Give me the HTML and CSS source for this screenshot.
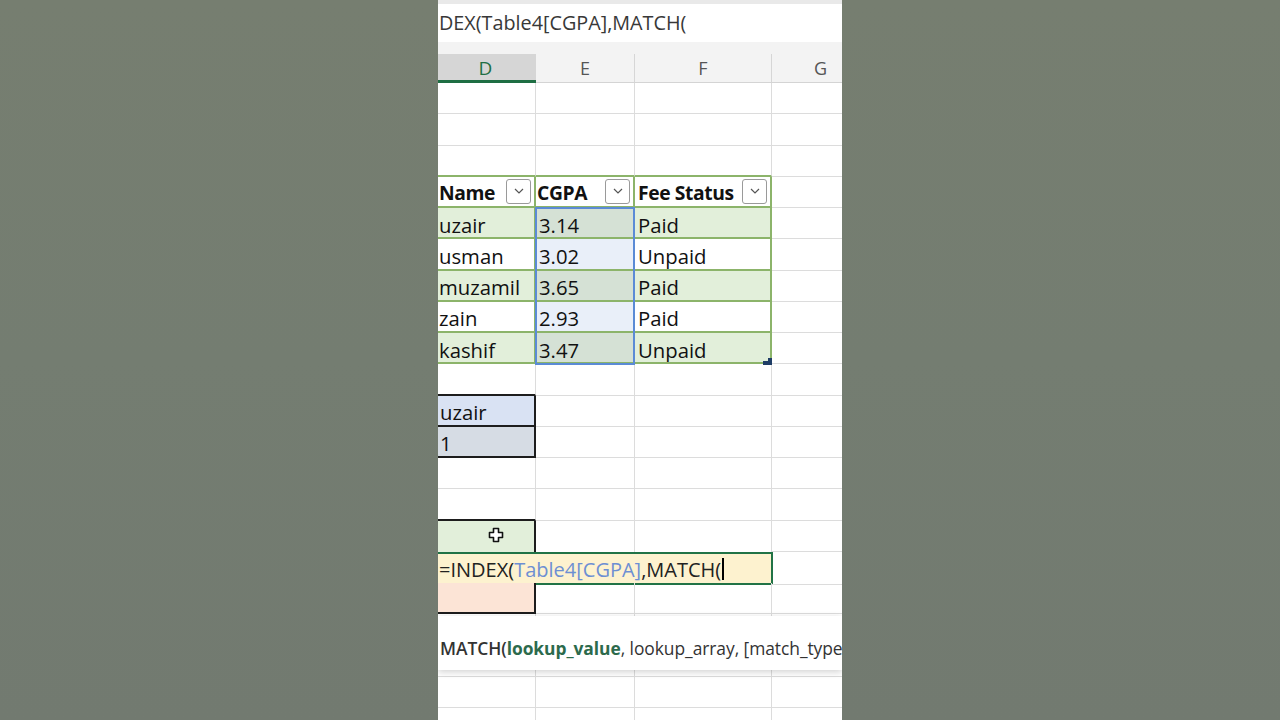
FILE: index.html
```html
<!DOCTYPE html>
<html>
<head>
<meta charset="utf-8">
<link rel="stylesheet" href="styles.css">
</head>
<body>
<div class="side"></div>
<div class="panel">
  <div class="topstrip"></div>
  <div class="fbar">DEX(Table4[CGPA],MATCH(</div>
  <div class="gap"></div>
  <div class="colhead">
    <div class="ch active">D</div>
    <div class="ch">E</div>
    <div class="ch">F</div>
    <div class="ch">G</div>
  </div>
  <div class="sheet">
    <div class="r"><div class="c"></div><div class="c"></div><div class="c"></div><div class="c"></div></div>
    <div class="r"><div class="c"></div><div class="c"></div><div class="c"></div><div class="c"></div></div>
    <div class="r"><div class="c gb"></div><div class="c gb"></div><div class="c gb"></div><div class="c"></div></div>
    <div class="r">
      <div class="c t th">Name<span class="dd"><svg width="10" height="6" viewBox="0 0 10 6"><path d="M1 1 L5 5 L9 1" fill="none" stroke="#555" stroke-width="1.2"/></svg></span></div>
      <div class="c t th">CGPA<span class="dd"><svg width="10" height="6" viewBox="0 0 10 6"><path d="M1 1 L5 5 L9 1" fill="none" stroke="#555" stroke-width="1.2"/></svg></span></div>
      <div class="c t th fcol">Fee Status<span class="dd"><svg width="10" height="6" viewBox="0 0 10 6"><path d="M1 1 L5 5 L9 1" fill="none" stroke="#555" stroke-width="1.2"/></svg></span></div>
      <div class="c"></div>
    </div>
    <div class="r"><div class="c t g">uzair</div><div class="c t sg">3.14</div><div class="c t g fcol">Paid</div><div class="c"></div></div>
    <div class="r"><div class="c t">usman</div><div class="c t sw">3.02</div><div class="c t fcol">Unpaid</div><div class="c"></div></div>
    <div class="r"><div class="c t g">muzamil</div><div class="c t sg">3.65</div><div class="c t g fcol">Paid</div><div class="c"></div></div>
    <div class="r"><div class="c t">zain</div><div class="c t sw">2.93</div><div class="c t fcol">Paid</div><div class="c"></div></div>
    <div class="r"><div class="c t g">kashif</div><div class="c t sg">3.47</div><div class="c t g fcol">Unpaid</div><div class="c"></div></div>
    <div class="r"><div class="c kb"></div><div class="c"></div><div class="c"></div><div class="c"></div></div>
    <div class="r"><div class="c kb kr blue1">uzair</div><div class="c"></div><div class="c"></div><div class="c"></div></div>
    <div class="r"><div class="c kb kr blue2">1</div><div class="c"></div><div class="c"></div><div class="c"></div></div>
    <div class="r"><div class="c"></div><div class="c"></div><div class="c"></div><div class="c"></div></div>
    <div class="r"><div class="c kb"></div><div class="c"></div><div class="c"></div><div class="c"></div></div>
    <div class="r"><div class="c kr nb green"></div><div class="c nb"></div><div class="c nb"></div><div class="c"></div></div>
    <div class="r">
      <div class="edit"><span class="dk">=INDEX(</span><span class="ref">Table4[CGPA]</span><span class="dk">,MATCH(</span><span class="caret"></span></div>
      <div class="c"></div>
    </div>
    <div class="r"><div class="c kb kr peach"></div><div class="c"></div><div class="c"></div><div class="c"></div></div>
    <div class="r"><div class="c"></div><div class="c"></div><div class="c"></div><div class="c"></div></div>
    <div class="r"><div class="c"></div><div class="c"></div><div class="c"></div><div class="c"></div></div>
    <div class="r"><div class="c"></div><div class="c"></div><div class="c"></div><div class="c"></div></div>
    <div class="r"><div class="c"></div><div class="c"></div><div class="c"></div><div class="c"></div></div>
  </div>

  <div class="selbox"></div>
  <svg class="handle" width="9" height="7" viewBox="0 0 9 7"><polygon points="5,0 9,0 9,7 0,7 0,3 5,3" fill="#1f3d66"/></svg>
  <svg class="cursor" width="16" height="16" viewBox="0 0 16 16"><path d="M5.5 1.5 H10.5 V5.5 H14.5 V10.5 H10.5 V14.5 H5.5 V10.5 H1.5 V5.5 H5.5 Z" fill="#fff" stroke="#111" stroke-width="1.6" stroke-linejoin="round"/></svg>

  <div class="tip"><span class="fn">MATCH(</span><span class="arg">lookup_value</span><span class="rest">, lookup_array, [match_type</span></div>
</div>
<div class="side"></div>
</body>
</html>
```

FILE: styles.css
```css
html, body {
  margin: 0;
  padding: 0;
}
body {
  width: 1280px;
  height: 720px;
  overflow: hidden;
  display: flex;
  background: #757d71;
  font-family: "Open Sans", "Noto Sans", sans-serif;
}
.side {
  flex: 1;
  background: linear-gradient(180deg, #767e70 0%, #747d71 50%, #727a70 100%);
}
.panel {
  width: 404px;
  height: 720px;
  background: #fff;
  position: relative;
  overflow: hidden;
  flex: none;
}
.topstrip {
  height: 4px;
  background: #e9e9e9;
}
.fbar {
  height: 38px;
  display: flex;
  align-items: center;
  padding-left: 1px;
  padding-bottom: 2px;
  box-sizing: border-box;
  font-size: 19.8px;
  color: #383838;
  white-space: nowrap;
}
.gap {
  height: 12px;
  background: #f3f3f3;
}
.colhead {
  display: grid;
  grid-template-columns: 98px 99px 137px 98px;
  height: 29px;
  background: #f3f3f3;
  border-bottom: 1px solid #d4d4d4;
  box-sizing: border-box;
}
.ch {
  display: flex;
  align-items: center;
  justify-content: center;
  font-size: 18px;
  color: #555;
  border-right: 1px solid #d6d6d6;
  box-sizing: border-box;
}
.ch.active {
  background: #d6d6d6;
  color: #1f6f44;
  font-size: 19px;
  border-bottom: 3px solid #1e6e43;
  border-right: none;
  height: 29px;
  margin-bottom: -1px;
  padding-top: 1px;
  padding-right: 3px;
}
.sheet {
  display: flex;
  flex-direction: column;
}
.r {
  display: grid;
  grid-template-columns: 98px 99px 137px 98px;
  height: 31.25px;
  flex: none;
}
.c {
  box-sizing: border-box;
  border-right: 1px solid #dcdcdc;
  border-bottom: 1px solid #dcdcdc;
  display: flex;
  align-items: center;
  padding-left: 2px;
  padding-top: 4px;
  font-size: 20.3px;
  color: #111;
  white-space: nowrap;
  overflow: hidden;
}
.gb {
  border-bottom: 2px solid #8cb46a;
}
.t {
  border-right: 2px solid #8cb46a;
  border-bottom: 2px solid #8cb46a;
  padding-left: 1px;
}
.t.fcol { padding-left: 3px; }
.th {
  font-weight: 700;
  font-size: 19.3px;
  letter-spacing: -0.4px;
  justify-content: space-between;
  background: #fff;
  padding-top: 2px;
}
.dd {
  width: 25px;
  height: 25px;
  box-sizing: border-box;
  border: 1px solid #9a9a9a;
  border-radius: 3px;
  background: #fff;
  display: flex;
  align-items: center;
  justify-content: center;
  margin-right: 3px;
  margin-top: -2px;
  flex: none;
}
.g { background: #e2efda; }
.sg { background: #d5e1d5; padding-left: 3px; }
.sw { background: #e9eff9; padding-left: 3px; }
.kb { border-bottom: 2px solid #1d1d1d; }
.kr { border-right: 2px solid #1d1d1d; }
.nb { border-bottom: none; }
.blue1 { background: #d9e2f3; }
.blue2 { background: #d6dce4; }
.green { background: #e2efda; }
.peach { background: #fce4d6; }
.edit {
  grid-column: 1 / span 3;
  box-sizing: border-box;
  border: 2px solid #217346;
  border-left: none;
  background: #fdf2cf;
  display: flex;
  align-items: center;
  padding-left: 1px;
  padding-top: 2px;
  font-size: 20px;
  white-space: nowrap;
  margin-right: -1px;
}
.dk { color: #222; }
.ref { color: #6d8fd3; }
.caret {
  display: inline-block;
  width: 1.5px;
  height: 22px;
  background: #000;
  margin-left: 1px;
}
.selbox {
  position: absolute;
  left: 97px;
  top: 207px;
  width: 100px;
  height: 158px;
  box-sizing: border-box;
  border: 2px solid #5b8bd6;
}
.handle {
  position: absolute;
  left: 325px;
  top: 358px;
}
.cursor {
  position: absolute;
  left: 50px;
  top: 527px;
}
.tip {
  position: absolute;
  left: 0;
  top: 616px;
  width: 404px;
  height: 54px;
  box-sizing: border-box;
  background: #fff;
  box-shadow: 0 2px 7px rgba(0, 0, 0, 0.18);
  display: flex;
  align-items: center;
  padding: 10px 0 0 2px;
  font-size: 17.4px;
  letter-spacing: -0.05px;
  color: #333;
  white-space: nowrap;
}
.fn { font-weight: 600; color: #333; }
.arg { font-weight: 700; color: #2c6a4c; }
.rest { color: #333; }
```
